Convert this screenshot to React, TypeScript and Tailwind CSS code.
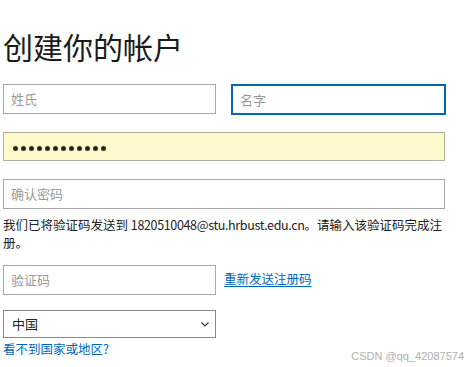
const font = { fontFamily: '"Noto Sans CJK SC", "Noto Sans", sans-serif' };

function Field({ placeholder, className = '' }: { placeholder: string; className?: string }) {
  return (
    <div className={`h-[30px] border border-[#a8a8a8] bg-white flex items-center pl-[7px] text-[13px] text-[#9a9a9a] ${className}`}>
      {placeholder}
    </div>
  );
}

export default function App() {
  return (
    <div className="relative w-[474px] h-[367px] overflow-hidden bg-white pl-[3px] text-[#1b1b1b]" style={font}>
      <h1 className="mt-[24px] h-[44px] text-[30px] leading-[44px] font-normal">创建你的帐户</h1>

      <div className="mt-[16px] flex gap-[15px]">
        <Field placeholder="姓氏" className="w-[213px]" />
        <div className="h-[31px] w-[215px] border-2 border-[#0067b8] flex items-center pl-[7px] text-[13px] text-[#9a9a9a]">
          名字
        </div>
      </div>

      <div className="mt-[17px] h-[29px] w-[442px] border border-[#b3b09a] bg-[#fffacd] flex items-center gap-[3px] pl-[9px] pt-[4px]">
        {Array.from({ length: 12 }).map((_, i) => (
          <span key={i} className="w-[5px] h-[5px] rounded-full bg-[#2f2a1f]" />
        ))}
      </div>

      <Field placeholder="确认密码" className="mt-[18px] w-[442px] h-[29px]" />

      <p className="mt-[7px] w-[460px] text-[12.5px] leading-[18px] text-[#222]">
        我们已将验证码发送到 <span className="tracking-[-0.35px]">1820510048@stu.hrbust.edu.cn</span>。请输入该验证码完成注
        <br />
        册。
      </p>

      <div className="mt-[13px] flex items-start gap-[8px]">
        <Field placeholder="验证码" className="w-[213px]" />
        <a className="mt-[5px] text-[12.5px] leading-[17px] text-[#0067b8] underline underline-offset-2">重新发送注册码</a>
      </div>

      <div className="mt-[15px] h-[28px] w-[213px] border border-[#8a8a8a] flex items-center justify-between pl-[8px] pr-[6px] text-[13px] text-[#222]">
        <span>中国</span>
        <svg width="8" height="5" viewBox="0 0 8 5" fill="none">
          <path d="M0.5 0.5 L4 4 L7.5 0.5" stroke="#333" strokeWidth="1.1" />
        </svg>
      </div>

      <a className="block mt-[3px] text-[12.5px] leading-[16px] text-[#0067b8]">看不到国家或地区?</a>

      <div className="absolute right-[10px] bottom-[4px] text-[11px] leading-[14px] text-[#b0b0b0]" style={{ fontFamily: '"Liberation Sans", Arial, sans-serif' }}>
        CSDN @qq_42087574
      </div>
    </div>
  );
}
